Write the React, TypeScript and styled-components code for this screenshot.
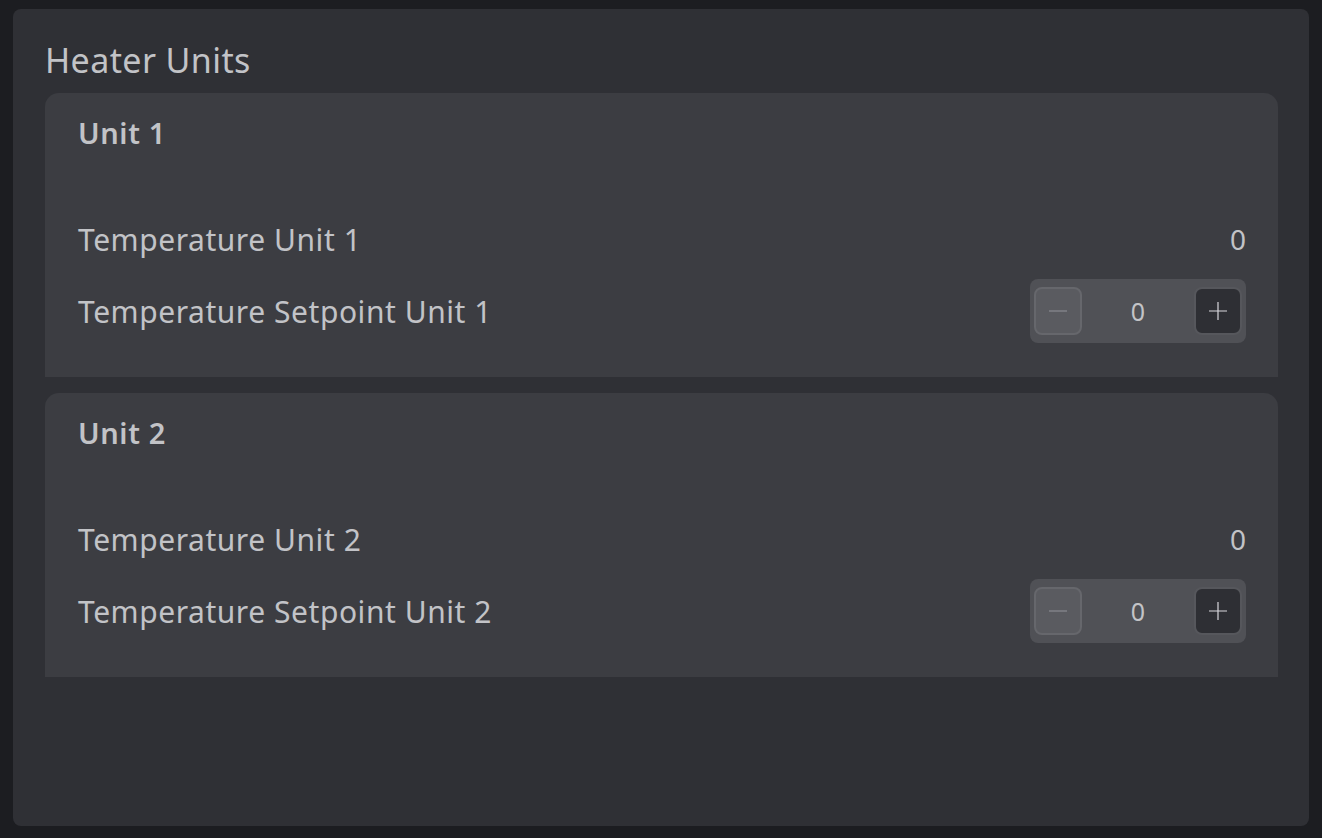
import React, { useState } from 'react';
import styled, { createGlobalStyle } from 'styled-components';

const GlobalStyle = createGlobalStyle`
  html, body {
    margin: 0;
    padding: 0;
    background: #1c1d21;
    font-family: 'Noto Sans', 'Open Sans', sans-serif;
    color: #c2c3c7;
  }
`;

interface Unit {
  id: number;
  temperature: number;
  setpoint: number;
}

const initialUnits: Unit[] = [
  { id: 1, temperature: 0, setpoint: 0 },
  { id: 2, temperature: 0, setpoint: 0 },
];

const Stepper = ({ value, onChange }: { value: number; onChange: (v: number) => void }) => {
  return (
    <StepperBox>
      <StepButton variant="minus" onClick={() => onChange(value - 1)} aria-label="decrease">
        <svg width="20" height="20" viewBox="0 0 20 20">
          <path d="M1 10h18" stroke="#8a8b90" strokeWidth="1.2" />
        </svg>
      </StepButton>
      <StepValue>{value}</StepValue>
      <StepButton variant="plus" onClick={() => onChange(value + 1)} aria-label="increase">
        <svg width="20" height="20" viewBox="0 0 20 20">
          <path d="M1 10h18M10 1v18" stroke="#d8d8dc" strokeWidth="1.2" />
        </svg>
      </StepButton>
    </StepperBox>
  );
};

export default function App() {
  const [units, setUnits] = useState(initialUnits);

  const setSetpoint = (id: number, v: number) =>
    setUnits((list) => list.map((u) => (u.id === id ? { ...u, setpoint: v } : u)));

  return (
    <>
      <GlobalStyle />
      <Page>
        <Panel>
          <Title>Heater Units</Title>
          <CardList>
            {units.map((u) => (
              <Card key={u.id}>
                <CardTitle>Unit {u.id}</CardTitle>
                <Rows>
                  <Row>
                    <Label>Temperature Unit {u.id}</Label>
                    <Value>{u.temperature}</Value>
                  </Row>
                  <Row>
                    <Label>Temperature Setpoint Unit {u.id}</Label>
                    <Stepper value={u.setpoint} onChange={(v) => setSetpoint(u.id, v)} />
                  </Row>
                </Rows>
              </Card>
            ))}
          </CardList>
        </Panel>
      </Page>
    </>
  );
}

const Page = styled.div`
  height: 838px;
  box-sizing: border-box;
  padding: 9px 13px 12px 13px;
  display: flex;
`;

const Panel = styled.section`
  flex: 1;
  background: #2f3035;
  border-radius: 8px;
  padding: 36px 31px 0 32px;
  display: flex;
  flex-direction: column;
`;

const Title = styled.h1`
  margin: 0;
  font-size: 34px;
  font-weight: 400;
  letter-spacing: 0.4px;
  line-height: 30px;
  color: #c2c3c7;
`;

const CardList = styled.div`
  margin-top: 18px;
  display: flex;
  flex-direction: column;
  gap: 16px;
`;

const Card = styled.div`
  background: #3c3d42;
  border-radius: 14px 14px 0 0;
  height: 284px;
  box-sizing: border-box;
  padding: 24px 32px 0 33px;
`;

const CardTitle = styled.h2`
  margin: 0;
  font-size: 29px;
  font-weight: 600;
  letter-spacing: 0.6px;
  line-height: 32px;
  color: #c2c3c7;
`;

const Rows = styled.div`
  margin-top: 58px;
  display: flex;
  flex-direction: column;
  gap: 8px;
`;

const Row = styled.div`
  display: flex;
  align-items: center;
  justify-content: space-between;
  min-height: 64px;
`;

const Label = styled.span`
  font-size: 30px;
  letter-spacing: 0.55px;
  color: #c2c3c7;
`;

const Value = styled.span`
  font-size: 28px;
  color: #c2c3c7;
`;

const StepperBox = styled.div`
  width: 216px;
  height: 64px;
  box-sizing: border-box;
  background: #505156;
  border-radius: 8px;
  padding: 0 4px;
  display: flex;
  align-items: center;
  justify-content: space-between;
`;

const StepButton = styled.button<{ variant: 'minus' | 'plus' }>`
  width: 48px;
  height: 48px;
  box-sizing: border-box;
  border-radius: 8px;
  border: 2px solid ${(p) => (p.variant === 'plus' ? '#56575c' : '#66676c')};
  background: ${(p) => (p.variant === 'plus' ? '#2e2f34' : '#5a5b60')};
  display: flex;
  align-items: center;
  justify-content: center;
  padding: 0;
  cursor: pointer;
`;

const StepValue = styled.span`
  font-size: 25px;
  color: #c2c3c7;
`;
